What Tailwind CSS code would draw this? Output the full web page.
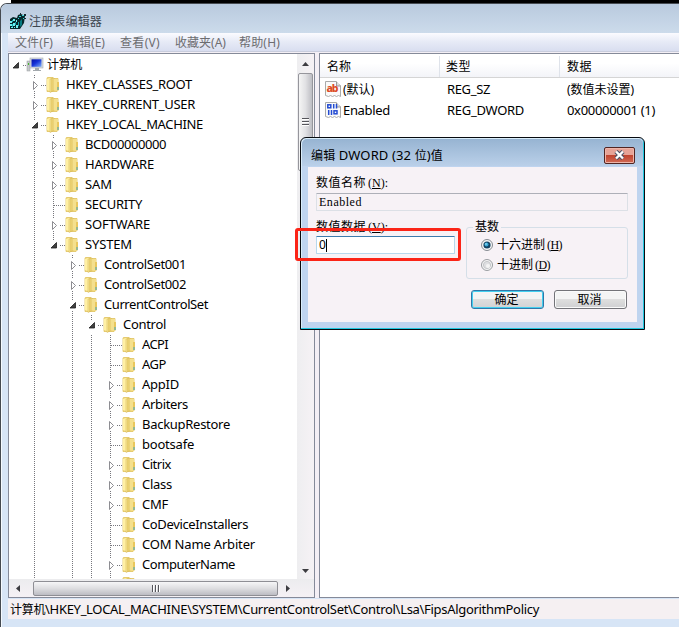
<!DOCTYPE html>
<html lang="zh-CN">
<head>
<meta charset="utf-8">
<title>注册表编辑器</title>
<script src="https://cdn.jsdelivr.net/npm/@tailwindcss/browser@4"></script>
</head>
<body class="overflow-hidden bg-white text-black font-['Noto_Sans','Noto_Sans_CJK_SC',sans-serif] text-[13px] leading-none">
<svg class="absolute h-0 w-0">
  <defs>
    <linearGradient id="gold"><stop stop-color="#fff3a9"/><stop offset=".45" stop-color="#e3c661"/><stop offset="1" stop-color="#f7e48f"/></linearGradient>
    <linearGradient id="screen" x2="1" y2="1"><stop stop-color="#0611a0"/><stop offset=".45" stop-color="#1632d8"/><stop offset="1" stop-color="#7baef7"/></linearGradient>
  </defs>
</svg>
<div class="relative flex h-[627px] w-[679px] flex-col overflow-hidden whitespace-nowrap">
  <div class="ml-[11px] h-[3px] shrink-0 bg-black"></div>
  <div class="flex h-[624px] shrink-0 flex-col rounded-tl-[7px] border-t border-l border-[#454a50] bg-[#d7e5f6] shadow-[inset_1px_1px_0_#f5faff]">
    <header class="flex h-[29px] shrink-0 items-center rounded-tl-[6px] bg-linear-to-b from-[#b9cade] to-[#ccdbeb] pt-1.5 pl-[8px] text-[12px] text-[#3d4650]">
      <svg width="17" height="17" viewBox="0 0 17 17" class="mr-[3px] shrink-0">
        <path d="M1 6l3-2 4 1 1-3 3-1 4 2-1 7-4 6H1z" fill="#062a2e"/>
        <path d="M1 8h2v2H1zM4 6h2v2H4zM7 7h1v2H7zM1 11h2v2H1zM4 10h2v3H4zM7 12h2v3H7zM2 14h2v1H2zM5 14h1v1H5z" fill="#6ff0f0"/>
        <path d="M3 7h1v2H3zM6 9h1v3H6zM9 9h1v4H9zM3 11h1v3H3z" fill="#14a7ad"/>
        <path d="M11 8l2-2v6l-2 2z" fill="#087c82"/>
        <path d="M10 3h2v1h-2zM13 2h2v1h-2zM14 5h1v1h-1zM9 5h1v1H9z" fill="#39d6d8"/>
        <path d="M11 0h1v2h-1zM15 1h2v2h-2zM15 5h2v1h-2z" fill="#132c32"/>
      </svg>
      <span data-w="73">注册表编辑器</span>
    </header>
    <nav class="ml-[7px] flex h-[19px] shrink-0 items-center border-b border-[#c9cddd] bg-linear-to-b from-[#fbfbff] via-[#e6eaf6] to-[#d9def0] pt-[2px] pl-[7px] text-[12px] text-[#6d6d70]">
      <span class="w-[52px]"><span data-w="38">文件(F)</span></span>
      <span class="w-[53px]"><span data-w="38">编辑(E)</span></span>
      <span class="w-[55px]"><span data-w="40">查看(V)</span></span>
      <span class="w-[64px]"><span data-w="51">收藏夹(A)</span></span>
      <span><span data-w="41">帮助(H)</span></span>
    </nav>
    <main class="ml-[7px] flex h-[546px] shrink-0 bg-[#f4eff5] pt-px">
      <section class="flex h-[545px] w-[307px] shrink-0 flex-col border border-[#858a99] bg-white">
        <div class="flex h-[525px] shrink-0">
          <div id="tree" class="h-[525px] w-[288px] shrink-0 overflow-hidden pt-px"></div>
          <div class="flex h-[525px] w-[17px] flex-col items-center bg-linear-to-r from-[#eeeef0] to-[#f6f2f5]">
            <svg class="shrink-0" width="15" height="19"><path d="M4 12l3.500-4 3.500 4z" fill="#3c3c40"/></svg>
            <div class="flex h-[98px] w-[15px] shrink-0 flex-col items-center justify-center gap-[1px] rounded-[2px] border border-[#96969c] bg-linear-to-r from-[#f5f5f5] via-[#e1e1e4] to-[#bdbdc3]">
              <i class="h-[2px] w-[7px] border-b border-white bg-[#55555b]"></i><i class="h-[2px] w-[7px] border-b border-white bg-[#55555b]"></i><i class="h-[2px] w-[7px] border-b border-white bg-[#55555b]"></i>
            </div>
            <svg class="mt-auto shrink-0" width="15" height="17"><path d="M4 7h7l-3.500 4z" fill="#3c3c40"/></svg>
          </div>
        </div>
        <div class="flex h-[18px] items-center bg-linear-to-b from-[#ececee] to-[#f5f1f5]">
          <svg class="shrink-0" width="24" height="17"><path d="M11 5v7L7 8.500z" fill="#3c3c40"/></svg>
          <div class="flex h-[15px] w-[245px] items-center justify-center gap-px rounded-[2px] border border-[#8e8e94] bg-linear-to-b from-[#f6f6f7] via-[#dddde0] to-[#bcbcc3]">
            <i class="h-[7px] w-[2px] border-r border-white bg-[#55555b]"></i><i class="h-[7px] w-[2px] border-r border-white bg-[#55555b]"></i><i class="h-[7px] w-[2px] border-r border-white bg-[#55555b]"></i>
          </div>
          <svg class="shrink-0" width="18" height="17"><path d="M8 5v7l4-3.500z" fill="#3c3c40"/></svg>
        </div>
      </section>
      <section class="ml-1 h-[545px] flex-1 border border-r-0 border-[#858a99] bg-white">
        <div class="flex h-[24px] items-center border-b border-[#d5d5d5] bg-linear-to-b from-white from-40% to-[#f3f4f8] pt-[2px] pl-[7px] text-[12px]">
          <span class="flex h-full w-[113px] items-center border-r border-[#dfe3ea]"><span data-w="24">名称</span></span>
          <span class="flex h-full w-[120px] items-center border-r border-[#dfe3ea] pl-[6px]"><span data-w="25">类型</span></span>
          <span class="pl-[7px]"><span data-w="25">数据</span></span>
        </div>
        <div class="flex h-[22px] items-center pt-px pl-[5px]">
          <svg class="shrink-0" width="17" height="17"><path d="M.5.5h11l1 2 3 2v11l-2-1-2 1-2-1-2 1-2-1-2 1-3-1z" fill="#fafafa" stroke="#aaa"/><path d="M11.500 1v4h4" fill="#ddd" stroke="#999"/><text x="1.500" y="10.500" font-family="Noto Sans" font-size="10.500" font-weight="800" fill="#dc4a25" textLength="12">ab</text></svg>
          <span class="w-[105px] pl-px text-[12px]"><span data-w="31">(默认)</span></span>
          <span class="w-[120px]"><span data-w="43">REG_SZ</span></span>
          <span class="text-[12px]" data-w="67">(数值未设置)</span>
        </div>
        <div class="flex h-[21px] items-center pl-[5px]">
          <svg class="shrink-0" width="17" height="17"><path d="M.5.5h11l1 2 3 2v11l-2-1-2 1-2-1-2 1-2-1-2 1-3-1z" fill="#fafafa" stroke="#aaa"/><path d="M11.500 1v4h4" fill="#ddd" stroke="#999"/><g fill="none" stroke="#234bd2" stroke-width="1.500"><rect x="2.800" y="2.800" width="3" height="3"/><path d="M8.700 2v4.500M11.500 2v4.500M3.700 8v5M6.500 8v5"/><rect x="9" y="8.800" width="3" height="3"/></g></svg>
          <span class="w-[105px] pl-px"><span data-w="47">Enabled</span></span>
          <span class="w-[120px]"><span data-w="77">REG_DWORD</span></span>
          <span data-w="88">0x00000001 (1)</span>
        </div>
      </section>
    </main>
    <footer class="ml-[7px] mt-px flex h-[20px] shrink-0 items-center bg-[#f5f0f2] pl-[2px] pt-px"><span data-w="529"><span class="text-[12px]">计算机</span>\HKEY_LOCAL_MACHINE\SYSTEM\CurrentControlSet\Control\Lsa\FipsAlgorithmPolicy</span></footer>
  </div>

  <div class="absolute top-[137px] left-[300px] flex h-[193px] w-[345px] flex-col rounded-t-[6px] border border-[#080b10] bg-[#bfd4ef] shadow-[inset_-1px_-1px_0_#20c7df,inset_1px_1px_0_#d9edfa]">
    <div class="mx-px mt-px flex h-[27px] shrink-0 items-center rounded-t-[5px] bg-linear-to-b from-[#97b4d2] to-[#bad0e9] pt-[5px] pr-[8px] pl-[9px] text-[13px]">
      <span data-w="132"><span class="text-[12px]">编辑</span> DWORD (32 <span class="text-[12px]">位</span>)<span class="text-[12px]">值</span></span>
      <span class="ml-auto flex h-[17px] w-[31px] items-center justify-center rounded-[2px] border border-[#512522] bg-linear-to-b from-[#e6a397] from-45% via-[#c04430] via-50% to-[#d16a55] shadow-[inset_0_0_0_1px_#eeb5aa]">
        <svg width="13" height="10" viewBox="0 0 13 10"><path d="M3 1.500l7 7M10 1.500l-7 7" stroke="#4d5366" stroke-width="4.400"/><path d="M3 1.500l7 7M10 1.500l-7 7" stroke="#fff" stroke-width="2.400"/></svg>
      </span>
    </div>
    <div class="mt-px ml-[7px] flex h-[155px] w-[329px] shrink-0 flex-col bg-[#f7f2f6] pt-[10px] pl-[8px] text-[12px]">
      <div class="flex h-[12px] items-center"><span data-w="50">数值名称</span><span class="ml-[2px] font-['Liberation_Serif',serif]" data-w="20">(<u>N</u>):</span></div>
      <div class="mt-[4px] flex h-[18px] w-[312px] items-center rounded-[1px] border border-t-[#aeb0b8] border-[#dce0e6] pl-[2px] font-['Liberation_Serif',serif]"><span data-w="43">Enabled</span></div>
      <div class="mt-[10px] flex">
        <div class="flex w-[150px] flex-col">
          <div class="flex h-[12px] items-center"><span data-w="50">数值数据</span><span class="ml-[2px] font-['Liberation_Serif',serif]" data-w="20">(<u>V</u>):</span></div>
          <div class="mt-[3px] flex h-[18px] w-[139px] items-center rounded-[1px] border border-[#b7d8ec] border-t-[#3d7bad] bg-white pl-[2px] text-[12px]"><span class="w-[7px]">0</span><i class="h-[13px] w-px bg-black"></i></div>
        </div>
        <fieldset class="mt-[6px] h-[52px] w-[162px] rounded-[3px] border border-[#d5dfe8]">
          <div class="-mt-[8px] ml-[6px] flex h-[14px] w-[28px] items-center justify-center bg-[#f7f2f6]"><span data-w="24">基数</span></div>
          <label class="mt-[3px] ml-[14px] flex h-[16px] items-center">
            <svg class="mr-[4px] shrink-0" width="12" height="12"><circle cx="6" cy="6" r="5.500" fill="#f7f7f7" stroke="#858b91"/><circle cx="6" cy="6" r="3.600" fill="#134263"/><circle cx="5.500" cy="5.500" r="2" fill="#39a9d7"/><circle cx="5" cy="5" r=".8" fill="#b3ecfc"/></svg>
            <span data-w="48">十六进制</span><span class="ml-[2px] font-['Liberation_Serif',serif]" data-w="15">(<u>H</u>)</span>
          </label>
          <label class="mt-[4px] ml-[14px] flex h-[16px] items-center">
            <svg class="mr-[4px] shrink-0" width="12" height="12"><circle cx="6" cy="6" r="5.500" fill="#f7f7f7" stroke="#999da1"/><circle cx="6" cy="6" r="3.600" fill="#dedfe1" stroke="#c5c7ca"/><circle cx="7" cy="7" r="2" fill="#f5f5f5"/></svg>
            <span data-w="36">十进制</span><span class="ml-[2px] font-['Liberation_Serif',serif]" data-w="15">(<u>D</u>)</span>
          </label>
        </fieldset>
      </div>
      <div class="mt-[11px] ml-[155px] flex gap-[10px]">
        <span class="flex h-[19px] w-[73px] items-center justify-center rounded-[3px] border border-[#3277a8] bg-linear-to-b from-[#f4f4f4] from-45% via-[#dedede] via-50% to-[#d2d2d4] pr-[2px] shadow-[inset_0_0_0_1px_#43cfef]"><span data-w="24">确定</span></span>
        <span class="flex h-[19px] w-[73px] items-center justify-center rounded-[3px] border border-[#737378] bg-linear-to-b from-[#f4f4f4] from-45% via-[#dedede] via-50% to-[#d0d0d2] pr-[2px] shadow-[inset_0_0_0_1px_#fafafa]"><span data-w="24">取消</span></span>
      </div>
    </div>
  </div>
  <div class="absolute top-[228px] left-[295px] h-[33px] w-[166px] rounded-[3px] border-3 border-[#fb2417]"></div>
</div>

<script>
// depth, name, state (+ collapsed, - expanded, blank leaf), label width
const rows = [
  [0,'计算机','-',35],[1,'HKEY_CLASSES_ROOT','+',126],[1,'HKEY_CURRENT_USER','+',129],[1,'HKEY_LOCAL_MACHINE','-',137],
  [2,'BCD00000000','+',81],[2,'HARDWARE','+',69],[2,'SAM','+',27],[2,'SECURITY','',57],[2,'SOFTWARE','+',65],[2,'SYSTEM','-',47],
  [3,'ControlSet001','+',82],[3,'ControlSet002','+',82],[3,'CurrentControlSet','-',104],[4,'Control','-',43],
  [5,'ACPI','',26],[5,'AGP','',24],[5,'AppID','+',37],[5,'Arbiters','+',46],[5,'BackupRestore','+',88],[5,'bootsafe','',52],
  [5,'Citrix','+',29],[5,'Class','+',30],[5,'CMF','+',26],[5,'CoDeviceInstallers','',106],[5,'COM Name Arbiter','',113],[5,'ComputerName','+',93],[5,'','',0]
];
const dots = 'stroke="#77777d" stroke-dasharray="1 1" fill="none"';
const folder = `<svg class="shrink-0" width="14" height="16" viewBox="0 0 14 16"><path d="M1 1q0-.5 1-.5h5l1 1h4v12l-1 1H1z" fill="#f3dc84" stroke="#dfc25e" stroke-width=".8"/><path d="M1 2l4-1v13l-4-1z" fill="#fff0a4"/><path d="M4 2l4-1v12.500l-4 2z" fill="url(#gold)" stroke="#d0b052" stroke-width=".5"/><path d="M8 2h4v11H8z" fill="#f4e08d"/><path d="M11 5h2v8h-2z" fill="#e9c75c"/><path d="M11.500 10h1v3h-1z" fill="#45a9c4"/></svg>`;
const computer = `<svg class="shrink-0" width="18" height="16" viewBox="0 0 18 16"><rect x="1" y="4" width="3" height="10" fill="#c5c8c9" stroke="#989da1" stroke-width=".5"/><path d="M2 6h1v2H2z" fill="#42b82b"/><rect x="4" y="1" width="13" height="10" fill="#d8dce1" stroke="#a8adb4" stroke-width=".6"/><rect x="5.500" y="2.300" width="10" height="7.500" fill="url(#screen)"/><path d="M9 11h4v2h2v1H7v-1h2z" fill="#a3a9ad"/></svg>`;
const arrow = s => s === '+' ? '<path d="M0 4h11v12H0z" fill="#fff"/><path d="M3.500 6.500v8L7.500 10.500z" fill="#fff" stroke="#8d8d92"/>'
  : s === '-' ? '<path d="M0 5h11v10H0z" fill="#fff"/><path d="M7.500 7.500v5.500h-5.500z" fill="#404040" stroke="#202020" stroke-width=".8"/>' : '';
document.getElementById('tree').innerHTML = rows.map(([d,name,s,w],i) => {
  let h = '';
  if (d === 0) h = `<svg class="ml-[2px] shrink-0" width="15" height="20">${arrow(s)}<path d="M12 10.500h3" ${dots}/></svg>${computer}`;
  else {
    for (let k = 1; k < d; k++) h += `<svg class="shrink-0" width="19" height="20">${k === 2 && i > 9 ? '' : `<path d="M4.500 0v20" ${dots}/>`}</svg>`;
    const end = name === 'SYSTEM' || name === 'Control' ? 10 : 20;
    h = `<span class="w-[21px] shrink-0"></span>${h}<svg class="shrink-0" width="16" height="20"><path d="M4.500 0v${end}M5 10.500h11" ${dots}/>${arrow(s)}</svg>${folder}`;
  }
  return `<div class="flex h-[20px] items-center">${h}<span class="${d ? 'pb-px pl-[6px]' : 'pl-[3px] text-[12px]'}"><span data-w="${w}">${name}</span></span></div>`;
}).join('');
// letter spacing brings each label to its column width
function fit() {
  for (const e of document.querySelectorAll('[data-w]')) {
    const n = e.textContent.length;
    if (!n) continue;
    e.style.display = 'inline-block';
    e.style.letterSpacing = '0px';
    e.style.letterSpacing = (e.dataset.w - e.getBoundingClientRect().width) / n + 'px';
  }
}
fit();
addEventListener('load', () => { fit(); requestAnimationFrame(fit); setTimeout(fit, 60); });
</script>
</body>
</html>
